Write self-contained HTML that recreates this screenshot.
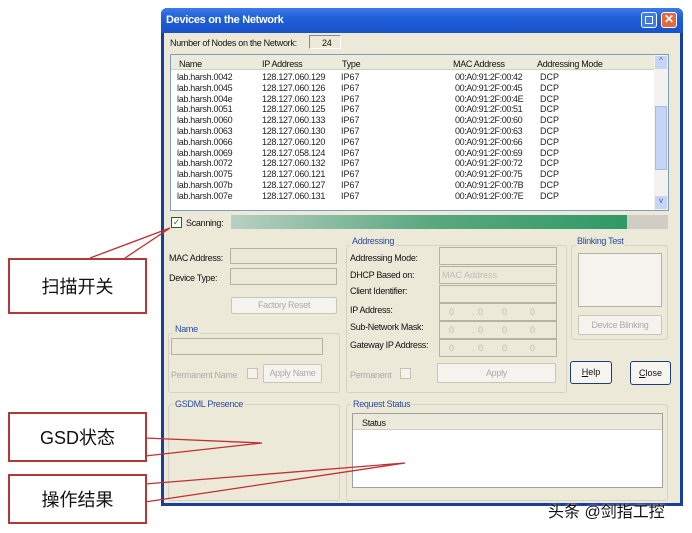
<!DOCTYPE html><html><head><meta charset="utf-8"><style>
*{margin:0;padding:0;box-sizing:border-box}
body{width:692px;height:533px;background:#fff;position:relative;overflow:hidden;font-family:"Liberation Sans",sans-serif;font-size:9px;color:#111}
.a{position:absolute}
.t{position:absolute;white-space:nowrap;font-size:9px;letter-spacing:-0.3px}
.f{position:absolute;background:#ece9d8;border:1px solid #b5b2a4}
.g{position:absolute;border:1px solid #d5d2c4;border-radius:3px}
.gl{position:absolute;color:#2a4aa0;background:#ece9d8;padding:0 2px;font-size:9px;white-space:nowrap;letter-spacing:-0.3px}
.b{position:absolute;border:1px solid #c9c6b8;background:#f4f3ee;border-radius:2px;color:#aaa;text-align:center;font-size:9px;letter-spacing:-0.3px}
.cb{position:absolute;width:11px;height:11px;border:1px solid #c5c2b4;background:#f4f3ee}
.call{position:absolute;border:2px solid #b03a3a;background:#fff;font-family:"Liberation Sans","Noto Sans CJK SC",sans-serif;font-size:18px;display:flex;align-items:center;justify-content:center;color:#111}
.ip span{position:absolute;top:3px;color:#bbb;font-size:9px}
</style></head><body>
<div class="a" style="left:161px;top:8px;width:522px;height:498px;background:#ece9d8;border:3px solid #1a3f9a;border-top:none;border-radius:6px 6px 0 0"></div>
<div class="a" style="left:161px;top:8px;width:522px;height:25px;background:linear-gradient(#3a7ae8,#1f5fd8 40%,#1a52c8);border-radius:6px 6px 0 0"></div>
<div class="t" style="left:166px;top:14px;color:#fff;font-weight:bold;font-size:11px">Devices on the Network</div>
<div class="a" style="left:641px;top:12px;width:16px;height:16px;background:#3d7bea;border:1px solid #fff;border-radius:3px"><div class="a" style="left:3px;top:3px;width:8px;height:8px;border:1px solid #fff"></div></div>
<div class="a" style="left:661px;top:12px;width:16px;height:16px;background:#e26a3d;border:1px solid #fff;border-radius:3px;color:#fff;font-size:12px;line-height:13px;text-align:center;font-weight:bold">✕</div>
<div class="t" style="left:170px;top:38px">Number of Nodes on the Network:</div>
<div class="a" style="left:309px;top:35px;width:32px;height:14px;border:1px solid #888;border-right-color:#fff;border-bottom-color:#fff"></div>
<div class="t" style="left:322px;top:38px">24</div>
<div class="a" style="left:170px;top:54px;width:499px;height:157px;background:#fff;border:1px solid #7f9db9"></div>
<div class="a" style="left:171px;top:55px;width:483px;height:15px;background:#ebeadb;border-bottom:1px solid #d0cfc0"></div>
<div class="t" style="left:179px;top:59px">Name</div><div class="t" style="left:262px;top:59px">IP Address</div><div class="t" style="left:342px;top:59px">Type</div><div class="t" style="left:453px;top:59px">MAC Address</div><div class="t" style="left:537px;top:59px">Addressing Mode</div>
<div class="a" style="left:654px;top:55px;width:14px;height:155px;background:#f3f2ee"></div>
<div class="a" style="left:655px;top:106px;width:12px;height:64px;background:#c6d4f6;border:1px solid #a8bbe8"></div>
<div class="a" style="left:655px;top:56px;width:12px;height:13px;background:#c6d4f6;font-size:8px;text-align:center;color:#4d6185">^</div>
<div class="a" style="left:655px;top:196px;width:12px;height:13px;background:#c6d4f6;font-size:8px;text-align:center;color:#4d6185">v</div>
<div class="a" style="left:177px;top:72px;line-height:10.8px;font-size:9px;letter-spacing:-0.3px;white-space:pre;color:#222">lab.harsh.0042
lab.harsh.0045
lab.harsh.004e
lab.harsh.0051
lab.harsh.0060
lab.harsh.0063
lab.harsh.0066
lab.harsh.0069
lab.harsh.0072
lab.harsh.0075
lab.harsh.007b
lab.harsh.007e</div>
<div class="a" style="left:262px;top:72px;line-height:10.8px;font-size:9px;letter-spacing:-0.3px;white-space:pre;color:#222">128.127.060.129
128.127.060.126
128.127.060.123
128.127.060.125
128.127.060.133
128.127.060.130
128.127.060.120
128.127.058.124
128.127.060.132
128.127.060.121
128.127.060.127
128.127.060.131</div>
<div class="a" style="left:341px;top:72px;line-height:10.8px;font-size:9px;white-space:pre;color:#222">IP67
IP67
IP67
IP67
IP67
IP67
IP67
IP67
IP67
IP67
IP67
IP67</div>
<div class="a" style="left:455px;top:72px;line-height:10.8px;font-size:9px;letter-spacing:-0.4px;white-space:pre;color:#222">00:A0:91:2F:00:42
00:A0:91:2F:00:45
00:A0:91:2F:00:4E
00:A0:91:2F:00:51
00:A0:91:2F:00:60
00:A0:91:2F:00:63
00:A0:91:2F:00:66
00:A0:91:2F:00:69
00:A0:91:2F:00:72
00:A0:91:2F:00:75
00:A0:91:2F:00:7B
00:A0:91:2F:00:7E</div>
<div class="a" style="left:540px;top:72px;line-height:10.8px;font-size:9px;white-space:pre;color:#222">DCP
DCP
DCP
DCP
DCP
DCP
DCP
DCP
DCP
DCP
DCP
DCP</div>
<div class="cb" style="left:171px;top:217px;border-color:#2a5d2a;background:#fff;font-size:9px;line-height:9px;text-align:center;color:#2a7a2a">✓</div>
<div class="t" style="left:186px;top:218px">Scanning:</div>
<div class="a" style="left:231px;top:215px;width:437px;height:14px;background:#cfcdc4"></div>
<div class="a" style="left:231px;top:215px;width:396px;height:14px;background:linear-gradient(90deg,#b8cfc2,#5aa880 50%,#2f9a66)"></div>
<div class="t" style="left:169px;top:253px">MAC Address:</div><div class="f" style="left:230px;top:248px;width:107px;height:16px"></div>
<div class="t" style="left:169px;top:273px">Device Type:</div><div class="f" style="left:230px;top:268px;width:107px;height:17px"></div>
<div class="b" style="left:231px;top:297px;width:106px;height:17px;line-height:15px">Factory Reset</div>
<div class="g" style="left:168px;top:333px;width:172px;height:60px"></div><div class="gl" style="left:173px;top:324px">Name</div>
<div class="f" style="left:171px;top:338px;width:152px;height:17px"></div>
<div class="t" style="left:171px;top:370px;color:#aaa">Permanent Name</div>
<div class="cb" style="left:247px;top:368px"></div>
<div class="b" style="left:263px;top:364px;width:59px;height:19px;line-height:17px">Apply Name</div>
<div class="g" style="left:346px;top:245px;width:221px;height:148px"></div><div class="gl" style="left:350px;top:236px">Addressing</div>
<div class="t" style="left:350px;top:253px">Addressing Mode:</div><div class="f" style="left:439px;top:247px;width:118px;height:18px"></div>
<div class="t" style="left:350px;top:270px">DHCP Based on:</div><div class="f" style="left:439px;top:266px;width:118px;height:18px;color:#bbb;padding:3px 2px">MAC Address</div>
<div class="t" style="left:350px;top:286px">Client Identifier:</div><div class="f" style="left:439px;top:285px;width:118px;height:18px"></div>
<div class="t" style="left:350px;top:305px">IP Address:</div><div class="f ip" style="left:439px;top:303px;width:118px;height:18px"><span style="left:9px">0</span><span style="left:32px">.</span><span style="left:38px">0</span><span style="left:62px">0</span><span style="left:90px">0</span></div>
<div class="t" style="left:350px;top:322px">Sub-Network Mask:</div><div class="f ip" style="left:439px;top:321px;width:118px;height:18px"><span style="left:9px">0</span><span style="left:32px">.</span><span style="left:38px">0</span><span style="left:62px">0</span><span style="left:90px">0</span></div>
<div class="t" style="left:350px;top:340px">Gateway IP Address:</div><div class="f ip" style="left:439px;top:339px;width:118px;height:18px"><span style="left:9px">0</span><span style="left:32px">.</span><span style="left:38px">0</span><span style="left:62px">0</span><span style="left:90px">0</span></div>
<div class="t" style="left:350px;top:370px;color:#aaa">Permanent</div>
<div class="cb" style="left:400px;top:368px"></div>
<div class="b" style="left:437px;top:363px;width:119px;height:20px;line-height:18px">Apply</div>
<div class="g" style="left:571px;top:245px;width:97px;height:95px"></div><div class="gl" style="left:575px;top:236px">Blinking Test</div>
<div class="a" style="left:578px;top:253px;width:84px;height:54px;background:#f4f3ee;border:1px solid #b5b2a4"></div>
<div class="b" style="left:578px;top:315px;width:84px;height:20px;line-height:18px">Device Blinking</div>
<div class="a" style="left:570px;top:361px;width:42px;height:23px;border:1px solid #1c3d7a;border-radius:3px;background:#f6f5f0;text-align:center;line-height:21px;font-size:9px"><u>H</u>elp</div>
<div class="a" style="left:630px;top:361px;width:41px;height:24px;border:1px solid #1c3d7a;border-radius:3px;background:#f6f5f0;text-align:center;line-height:22px;font-size:9px"><u>C</u>lose</div>
<div class="g" style="left:168px;top:404px;width:172px;height:97px"></div><div class="gl" style="left:173px;top:399px">GSDML Presence</div>
<div class="g" style="left:346px;top:404px;width:322px;height:97px"></div><div class="gl" style="left:351px;top:399px">Request Status</div>
<div class="a" style="left:352px;top:413px;width:311px;height:75px;background:#fff;border:1px solid #a0a0a0"></div>
<div class="a" style="left:353px;top:414px;width:309px;height:16px;background:#ebeadb;border-bottom:1px solid #ccc"></div>
<div class="t" style="left:362px;top:418px">Status</div>
<svg class="a" style="left:0;top:0" width="692" height="533"><g stroke="#c03030" stroke-width="1.3" fill="none">
<polyline points="90,258 170,228 125,258"/>
<polyline points="145,438 262,443 145,456"/>
<polyline points="145,484 405,463 145,502"/>
</g></svg>
<div class="call" style="left:8px;top:258px;width:139px;height:56px">扫描开关</div>
<div class="call" style="left:8px;top:412px;width:139px;height:50px">GSD状态</div>
<div class="call" style="left:8px;top:474px;width:139px;height:50px">操作结果</div>
<div class="a" style="left:548px;top:498px;font-family:'Liberation Sans','Noto Sans CJK SC',sans-serif;font-size:16px;color:#111;white-space:nowrap;text-shadow:0 0 3px #fff">头条 @剑指工控</div>
</body></html>
